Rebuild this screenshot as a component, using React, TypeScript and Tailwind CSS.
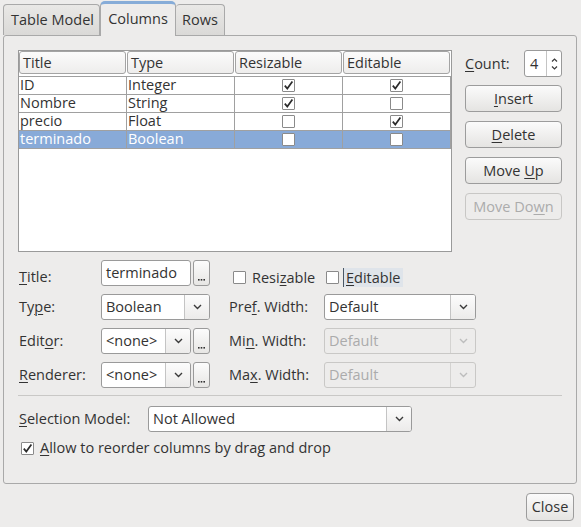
import React from "react";

const U = ({ children }: { children: React.ReactNode }) => (
  <span className="underline decoration-1 underline-offset-[2px]">{children}</span>
);

function Check({ checked, className = "" }: { checked?: boolean; className?: string }) {
  return (
    <span
      className={`w-[13px] h-[13px] shrink-0 border border-[#8a8a8a] bg-white rounded-[1px] flex items-center justify-center ${className}`}
    >
      {checked && (
        <svg width="11" height="11" viewBox="0 0 11 11">
          <path d="M1.8 5.6 L4.3 8.6 L9.4 1.6" stroke="#2b2b2b" strokeWidth="1.7" fill="none" />
        </svg>
      )}
    </span>
  );
}

function Chevron({ disabled }: { disabled?: boolean }) {
  return (
    <svg width="9" height="6" viewBox="0 0 9 6">
      <path d="M1 1 L4.5 4.5 L8 1" stroke={disabled ? "#bdbdbd" : "#3a3a3a"} strokeWidth="1.4" fill="none" />
    </svg>
  );
}

function Combo({
  text,
  width,
  disabled,
}: {
  text: string;
  width: string;
  disabled?: boolean;
}) {
  return (
    <div
      className={`h-[26px] ${width} shrink-0 flex border rounded-[3px] overflow-hidden ${
        disabled ? "border-[#c9c8c6] bg-[#edeceb] text-[#ababab]" : "border-[#9a9a9a] bg-white"
      }`}
    >
      <div className="flex-1 pl-[4px] flex items-center whitespace-nowrap overflow-hidden">{text}</div>
      <div
        className={`w-[25px] border-l flex items-center justify-center ${
          disabled ? "border-[#d4d3d1]" : "border-[#c4c4c4] bg-gradient-to-b from-[#fcfcfc] to-[#ecebea]"
        }`}
      >
        <Chevron disabled={disabled} />
      </div>
    </div>
  );
}

function Dots() {
  return (
    <div className="w-[17px] h-[26px] shrink-0 ml-[2px] border border-[#9a9a9a] rounded-[3px] bg-gradient-to-b from-[#fcfcfc] to-[#e7e6e4] flex items-end justify-center pb-[4px]">
      <svg width="7" height="2" viewBox="0 0 7 2">
        <rect x="0" y="0" width="1.6" height="1.6" fill="#333" />
        <rect x="2.7" y="0" width="1.6" height="1.6" fill="#333" />
        <rect x="5.4" y="0" width="1.6" height="1.6" fill="#333" />
      </svg>
    </div>
  );
}

function Btn({
  children,
  disabled,
  className = "",
}: {
  children: React.ReactNode;
  disabled?: boolean;
  className?: string;
}) {
  return (
    <div
      className={`h-[27px] border rounded-[4px] flex items-center justify-center ${
        disabled
          ? "border-[#c8c7c5] text-[#ababab] bg-[#edeceb]"
          : "border-[#9c9c9c] bg-gradient-to-b from-[#fbfbfb] to-[#e5e4e2]"
      } ${className}`}
    >
      {children}
    </div>
  );
}

const rows = [
  { title: "ID", type: "Integer", r: true, e: true },
  { title: "Nombre", type: "String", r: true, e: false },
  { title: "precio", type: "Float", r: false, e: true },
  { title: "terminado", type: "Boolean", r: false, e: false, sel: true },
];

export default function App() {
  return (
    <div className="w-[581px] h-[527px] bg-[#edeceb] text-[#333333] text-[14.5px] font-['Open_Sans','DejaVu_Sans',sans-serif] flex flex-col overflow-hidden">
      {/* Tabs */}
      <div className="flex h-[35px] pl-[3px] items-end">
        <div className="w-[97px] h-[31px] border border-[#a9a9a9] border-b-0 rounded-t-[4px] bg-gradient-to-b from-[#e9e8e6] to-[#dad9d7] flex items-center justify-center pl-[2px]">
          Table Model
        </div>
        <div className="w-[76px] h-[35px] -mb-px relative z-10 border border-t-[3px] border-[#a9a9a9] border-t-[#86acd8] border-b-0 rounded-t-[5px] bg-[#edeceb] flex items-center justify-center pb-[2px]">
          Columns
        </div>
        <div className="w-[49px] h-[31px] border border-l-0 border-[#a9a9a9] border-b-0 rounded-t-[4px] bg-gradient-to-b from-[#e9e8e6] to-[#dad9d7] flex items-center justify-center">
          Rows
        </div>
      </div>

      {/* Panel */}
      <div className="ml-[3px] w-[574px] h-[449px] border border-[#a9a9a9] rounded-[3px] px-[14px] pt-[14px] flex flex-col">
        {/* Top: table + buttons */}
        <div className="flex">
          <div className="w-[434px] h-[202px] border border-[#9a9a9a] bg-white flex flex-col">
            <div className="flex h-[25px]">
              {["Title", "Type", "Resizable", "Editable"].map((h) => (
                <div key={h} className="w-[108px] pr-[1px]">
                  <div className="h-[23px] border border-[#a4a4a4] rounded-[3px] bg-gradient-to-b from-[#fbfbfb] to-[#eeedec] flex items-center pl-[3px]">
                    {h}
                  </div>
                </div>
              ))}
            </div>
            <div className="flex flex-col">
              {rows.map((r, i) => (
                <div
                  key={r.title}
                  className={`flex h-[18px] border-t border-[#a0a0a0] w-[432px] ${
                    i === rows.length - 1 ? "h-[19px] border-b" : ""
                  } ${r.sel ? "bg-[#88aad8] text-white" : ""}`}
                >
                  <div className="w-[108px] border-r border-[#a0a0a0] flex items-center pl-[1px] leading-none">
                    {r.title}
                  </div>
                  <div className="w-[108px] border-r border-[#a0a0a0] flex items-center pl-[1px] leading-none">
                    {r.type}
                  </div>
                  <div className="w-[108px] border-r border-[#a0a0a0] flex items-center justify-center">
                    <Check checked={r.r} />
                  </div>
                  <div className="w-[108px] border-r border-[#a0a0a0] flex items-center justify-center">
                    <Check checked={r.e} />
                  </div>
                </div>
              ))}
            </div>
          </div>

          <div className="ml-[13px] w-[97px] flex flex-col">
            <div className="h-[27px] flex items-center">
              <span>
                <U>C</U>ount:
              </span>
              <div className="ml-auto w-[38px] h-[27px] border border-[#9a9a9a] rounded-[3px] bg-white flex">
                <div className="flex-1 flex items-center pl-[5px]">4</div>
                <div className="w-[15px] border-l border-[#c4c4c4] flex flex-col items-center justify-center gap-[4px]">
                  <svg width="7" height="4" viewBox="0 0 7 4">
                    <path d="M1 3.5 L3.5 1 L6 3.5" stroke="#3a3a3a" strokeWidth="1.2" fill="none" />
                  </svg>
                  <svg width="7" height="4" viewBox="0 0 7 4">
                    <path d="M1 0.5 L3.5 3 L6 0.5" stroke="#3a3a3a" strokeWidth="1.2" fill="none" />
                  </svg>
                </div>
              </div>
            </div>
            <div className="mt-[8px] flex flex-col gap-[9px]">
              <Btn>
                <span>
                  <U>I</U>nsert
                </span>
              </Btn>
              <Btn>
                <span>
                  <U>D</U>elete
                </span>
              </Btn>
              <Btn>
                <span>
                  Move <U>U</U>p
                </span>
              </Btn>
              <Btn disabled>
                <span>
                  Move Do<U>w</U>n
                </span>
              </Btn>
            </div>
          </div>
        </div>

        {/* Form */}
        <div className="mt-[8px] flex flex-col gap-[8px]">
          <div className="h-[26px] flex items-start">
            <div className="w-[83px] pl-[1px] mt-[7px] leading-[20px]">
              <U>T</U>itle:
            </div>
            <div className="w-[90px] h-[26px] border border-[#9a9a9a] rounded-[3px] bg-white flex items-start pt-[1px] pl-[4px]">
              terminado
            </div>
            <Dots />
            <div className="mt-[8px] h-[19px] flex items-center">
              <Check className="ml-[23px]" />
              <span className="ml-[6px] w-[74px]">
                Resi<U>z</U>able
              </span>
              <Check />
              <span className="ml-[4px] h-[19px] border-l border-[#4a5866] bg-[#dfe4ea] pl-[2px] pr-[2px] flex items-center">
                <span>
                  <U>E</U>ditable
                </span>
              </span>
            </div>
          </div>
          <div className="h-[26px] flex items-center">
            <div className="w-[83px] pl-[1px]">
              Ty<U>p</U>e:
            </div>
            <Combo text="Boolean" width="w-[109px]" />
            <div className="ml-[19px] w-[95px]">
              Pre<U>f</U>. Width:
            </div>
            <Combo text="Default" width="w-[152px]" />
          </div>
          <div className="h-[26px] flex items-center">
            <div className="w-[83px] pl-[1px]">
              Edit<U>o</U>r:
            </div>
            <Combo text="<none>" width="w-[90px]" />
            <Dots />
            <div className="ml-[19px] w-[95px]">
              Mi<U>n</U>. Width:
            </div>
            <Combo text="Default" width="w-[152px]" disabled />
          </div>
          <div className="h-[26px] flex items-center">
            <div className="w-[83px] pl-[1px]">
              <U>R</U>enderer:
            </div>
            <Combo text="<none>" width="w-[90px]" />
            <Dots />
            <div className="ml-[19px] w-[95px]">
              Ma<U>x</U>. Width:
            </div>
            <Combo text="Default" width="w-[152px]" disabled />
          </div>
        </div>

        <div className="mt-[7px] w-[544px] border-t border-[#c9c8c6]" />

        <div className="mt-[10px] h-[26px] flex items-center">
          <div className="w-[130px] pl-[1px]">
            <U>S</U>election Model:
          </div>
          <Combo text="Not Allowed" width="w-[264px]" />
        </div>

        <div className="mt-[7px] h-[18px] flex items-center pl-[3px]">
          <Check checked />
          <span className="ml-[6px]">
            <U>A</U>llow to reorder columns by drag and drop
          </span>
        </div>
      </div>

      <div className="mt-[9px] flex justify-end pr-[7px]">
        <Btn className="w-[48px] h-[28px]">Close</Btn>
      </div>
    </div>
  );
}
